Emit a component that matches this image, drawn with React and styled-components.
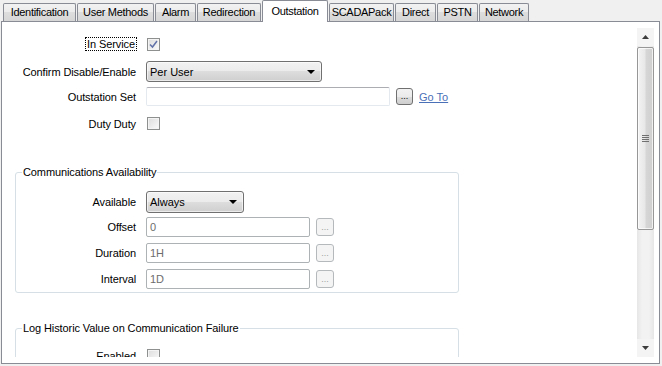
import React from 'react';
import styled, { createGlobalStyle } from 'styled-components';

const GlobalStyle = createGlobalStyle`
  html, body {
    margin: 0;
    padding: 0;
    background: #f0f0f0;
  }
  body {
    font-family: 'Liberation Sans', Arial, sans-serif;
    font-size: 11px;
    color: #000;
  }
`;

const TABS = [
  { label: 'Identification', w: 73 },
  { label: 'User Methods', w: 77 },
  { label: 'Alarm', w: 41 },
  { label: 'Redirection', w: 64 },
  { label: 'Outstation', w: 66, active: true },
  { label: 'SCADAPack', w: 65 },
  { label: 'Direct', w: 41 },
  { label: 'PSTN', w: 41 },
  { label: 'Network', w: 50 },
];

const Window = styled.div`
  width: 662px;
  height: 366px;
  padding-left: 1px;
  box-sizing: border-box;
  overflow: hidden;
`;

const TabStrip = styled.div`
  display: flex;
  align-items: flex-end;
  height: 21px;
  padding-left: 2px;
`;

const Tab = styled.div`
  box-sizing: border-box;
  width: ${(p) => p.$w}px;
  height: ${(p) => (p.$active ? 22 : 18)}px;
  margin-right: 1px;
  margin-bottom: ${(p) => (p.$active ? -1 : 0)}px;
  padding-top: ${(p) => (p.$active ? 1 : 0)}px;
  border: 1px solid #898c95;
  border-bottom: none;
  border-radius: 2px 2px 0 0;
  background: ${(p) =>
    p.$active
      ? '#fff'
      : 'linear-gradient(#f2f2f2, #ebebeb 50%, #dddddd 50%, #d6d6d6)'};
  position: relative;
  z-index: ${(p) => (p.$active ? 2 : 1)};
  text-align: center;
  line-height: ${(p) => (p.$active ? 18 : 17)}px;
  letter-spacing: -0.3px;
  white-space: nowrap;
  overflow: hidden;
`;

const Panel = styled.div`
  box-sizing: border-box;
  width: 659px;
  height: 343px;
  border: 1px solid #898c95;
  background: #fff;
  display: flex;
  padding: 6px 5px 6px 0;
`;

const Viewport = styled.div`
  flex: 1;
  overflow: hidden;
  padding-top: 9px;
`;

const Row = styled.div`
  display: flex;
  align-items: center;
  height: ${(p) => p.$h}px;
  margin-top: ${(p) => p.$mt || 0}px;
`;

const Label = styled.div`
  box-sizing: border-box;
  width: ${(p) => p.$w}px;
  flex-shrink: 0;
  text-align: right;
  padding-right: 1px;
  letter-spacing: -0.1px;
  white-space: nowrap;
`;

const Focus = styled.span`
  border: 1px dotted #000;
  padding: 0 1px;
  margin-right: -1px;
  line-height: 12px;
  display: inline-block;
`;

const Controls = styled.div`
  display: flex;
  align-items: center;
  margin-left: 9px;
  height: 100%;
`;

const Check = styled.div`
  box-sizing: border-box;
  width: 13px;
  height: 13px;
  margin-left: 1px;
  border: 1px solid #8e8f8f;
  background: linear-gradient(135deg, #dcdcdc, #fbfbfb);
  box-shadow: inset 0 0 0 1px #f4f4f4;
  display: flex;
  align-items: center;
  justify-content: center;
`;

const Combo = styled.div`
  box-sizing: border-box;
  width: ${(p) => p.$w}px;
  height: ${(p) => p.$h}px;
  border: 1px solid #707070;
  border-radius: 3px;
  background: linear-gradient(#f2f2f2, #ebebeb 50%, #dddddd 50%, #cfcfcf);
  box-shadow: inset 0 0 0 1px rgba(255, 255, 255, 0.6);
  display: flex;
  align-items: center;
  justify-content: space-between;
  padding: 0 6px 0 3px;
`;

const TextBox = styled.div`
  box-sizing: border-box;
  width: ${(p) => p.$w}px;
  height: ${(p) => p.$h}px;
  border: 1px solid ${(p) => (p.$disabled ? '#adb2b5' : '#e3e9ef')};
  border-top-color: ${(p) => (p.$disabled ? '#adb2b5' : '#abadb3')};
  border-radius: 2px;
  background: #fff;
  color: #6d6d6d;
  padding-left: 3px;
  display: flex;
  align-items: center;
`;

const Dots = styled.div`
  box-sizing: border-box;
  width: ${(p) => p.$s}px;
  height: ${(p) => p.$s}px;
  margin-left: 6px;
  border: 1px solid ${(p) => (p.$disabled ? '#b5b9bc' : '#707070')};
  border-radius: 3px;
  background: ${(p) =>
    p.$disabled
      ? '#f4f4f4'
      : 'linear-gradient(#f2f2f2, #ebebeb 50%, #dddddd 50%, #cfcfcf)'};
  color: ${(p) => (p.$disabled ? '#a0a0a0' : '#000')};
  font-size: 9px;
  line-height: 10px;
  display: flex;
  align-items: flex-end;
  justify-content: center;
  padding-bottom: 3px;
`;

const Link = styled.span`
  margin-left: 6px;
  color: #4a70b8;
  text-decoration: underline;
`;

const Group = styled.div`
  box-sizing: border-box;
  position: relative;
  width: 444px;
  margin-left: 13px;
  margin-top: ${(p) => p.$mt}px;
  border: 1px solid #d5dfe5;
  border-radius: 3px;
  padding: ${(p) => p.$pad};
`;

const Caption = styled.div`
  position: absolute;
  top: -8px;
  left: 6px;
  padding: 0 1px;
  background: #fff;
  line-height: 14px;
  letter-spacing: -0.1px;
  white-space: nowrap;
`;

const ScrollBar = styled.div`
  width: 17px;
  display: flex;
  flex-direction: column;
  background: linear-gradient(90deg, #e6e6e6, #f2f2f2 30%, #f2f2f2 70%, #e6e6e6);
`;

const ScrollButton = styled.div`
  height: 18px;
  display: flex;
  align-items: center;
  justify-content: center;
  background: #f4f4f4;
`;

const Thumb = styled.div`
  box-sizing: border-box;
  height: 183px;
  margin: 1px 0 0 0;
  border: 1px solid #979797;
  border-radius: 2px;
  background: linear-gradient(90deg, #f3f3f3, #e8e8e8 45%, #d6d6d6 55%, #cfcfcf);
  box-shadow: inset 0 0 0 1px rgba(255, 255, 255, 0.7);
  display: flex;
  align-items: center;
  justify-content: center;
`;

const Spacer = styled.div`
  flex: 1;
`;

const Arrow = ({ up }) => (
  <svg width="7" height="4" viewBox="0 0 7 4">
    <polygon points={up ? '3.5,0 7,4 0,4' : '0,0 7,0 3.5,4'} fill="#3c3c3c" />
  </svg>
);

const ComboArrow = () => (
  <svg width="8" height="4" viewBox="0 0 8 4">
    <polygon points="0,0 8,0 4,4" fill="#000" />
  </svg>
);

const Tick = () => (
  <svg width="9" height="9" viewBox="0 0 9 9">
    <path d="M1 4.5 L3.5 7 L8 1" stroke="#6172a8" strokeWidth="1.5" fill="none" />
  </svg>
);

const Grip = () => (
  <svg width="7" height="8" viewBox="0 0 7 8">
    {[0, 2, 4, 6].map((y) => (
      <rect key={y} x="0" y={y} width="7" height="1" fill="#707070" />
    ))}
  </svg>
);

const PickRow = ({ label, value, mt }) => (
  <Row $h={20} $mt={mt}>
    <Label $w={121}>{label}</Label>
    <Controls>
      <TextBox $w={164} $h={20} $disabled>
        {value}
      </TextBox>
      <Dots $s={18} $disabled>
        ...
      </Dots>
    </Controls>
  </Row>
);

const App = () => (
  <Window>
    <GlobalStyle />
    <TabStrip>
      {TABS.map((t) => (
        <Tab key={t.label} $w={t.w} $active={t.active}>
          {t.label}
        </Tab>
      ))}
    </TabStrip>
    <Panel>
      <Viewport>
        <Row $h={14}>
          <Label $w={135}>
            <Focus>In Service</Focus>
          </Label>
          <Controls>
            <Check>
              <Tick />
            </Check>
          </Controls>
        </Row>
        <Row $h={21} $mt={10}>
          <Label $w={135}>Confirm Disable/Enable</Label>
          <Controls>
            <Combo $w={176} $h={21}>
              Per User
              <ComboArrow />
            </Combo>
          </Controls>
        </Row>
        <Row $h={19} $mt={5}>
          <Label $w={135}>Outstation Set</Label>
          <Controls>
            <TextBox $w={244} $h={19} />
            <Dots $s={17}>...</Dots>
            <Link>Go To</Link>
          </Controls>
        </Row>
        <Row $h={13} $mt={11}>
          <Label $w={135}>Duty Duty</Label>
          <Controls>
            <Check />
          </Controls>
        </Row>

        <Group $mt={42} $pad="18px 0 3px 0">
          <Caption>Communications Availability</Caption>
          <Row $h={22}>
            <Label $w={121}>Available</Label>
            <Controls>
              <Combo $w={98} $h={22}>
                Always
                <ComboArrow />
              </Combo>
            </Controls>
          </Row>
          <PickRow label="Offset" value="0" mt={4} />
          <PickRow label="Duration" value="1H" mt={6} />
          <PickRow label="Interval" value="1D" mt={6} />
        </Group>

        <Group $mt={35} $pad="20px 0 20px 0">
          <Caption>Log Historic Value on Communication Failure</Caption>
          <Row $h={13}>
            <Label $w={121}>Enabled</Label>
            <Controls>
              <Check />
            </Controls>
          </Row>
        </Group>
      </Viewport>
      <ScrollBar>
        <ScrollButton>
          <Arrow up />
        </ScrollButton>
        <Thumb>
          <Grip />
        </Thumb>
        <Spacer />
        <ScrollButton>
          <Arrow />
        </ScrollButton>
      </ScrollBar>
    </Panel>
  </Window>
);

export default App;
